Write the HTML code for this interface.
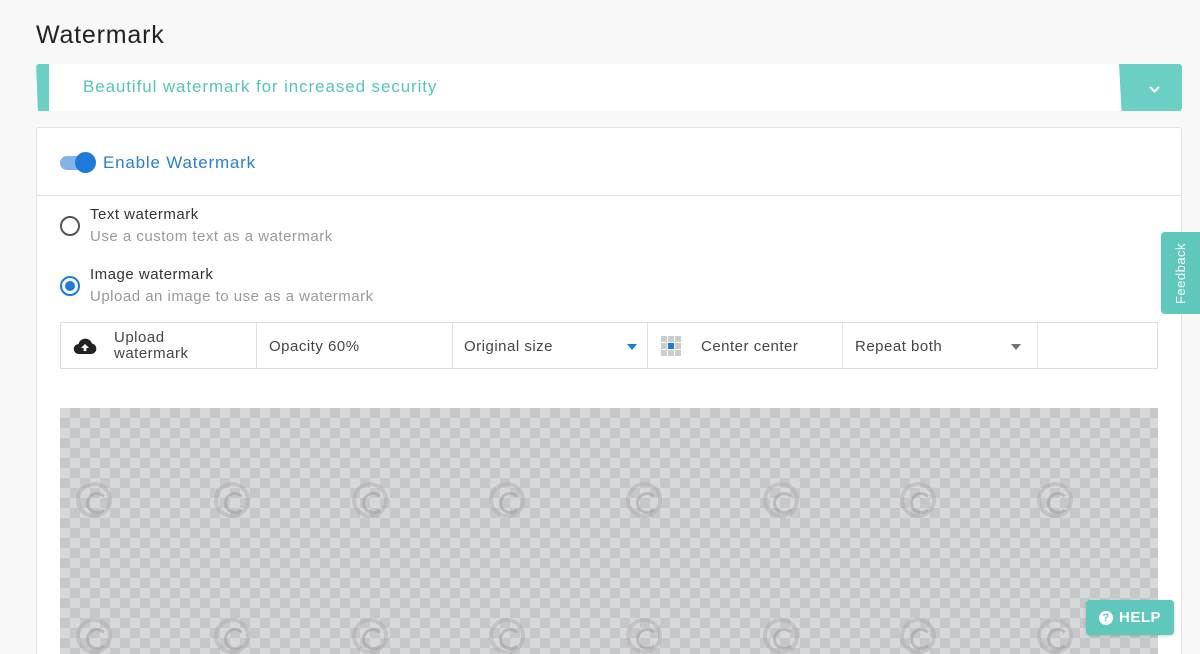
<!DOCTYPE html>
<html style="height:654px;overflow:hidden"><head><style>
*{box-sizing:border-box;margin:0;padding:0}
body{width:1200px;height:654px;overflow:hidden;background:#f8f8f8;font-family:"Liberation Sans",sans-serif;position:relative;color:#333}
.abs{position:absolute}
h1{position:absolute;left:36px;top:21px;font-size:25px;font-weight:normal;color:#222;letter-spacing:.8px}
.banner{left:36px;top:64px;width:1146px;height:47px;background:#fff}
.card{left:36px;top:127px;width:1146px;height:540px;background:#fff;border:1px solid #e3e3e3;border-radius:3px}
.cell{position:absolute;top:0;height:46px;border-right:1px solid #e0e0e0;font-size:15px;color:#444;display:flex;align-items:center;letter-spacing:.5px}
.checker{left:60px;top:408px;width:1098px;height:260px;
background-color:#d7d8da;
background-image:linear-gradient(45deg,#c6c7c9 25%,transparent 25%,transparent 75%,#c6c7c9 75%),linear-gradient(45deg,#c6c7c9 25%,transparent 25%,transparent 75%,#c6c7c9 75%);
background-size:20px 20px;background-position:0 0,10px 10px}
.cp{position:absolute;width:36px;height:36px;border-radius:50%;border:4px solid rgba(170,170,172,.45);}
.cp:after{content:"";position:absolute;left:6px;top:6px;width:16px;height:16px;border-radius:50%;border:3px solid rgba(150,150,152,.45);border-right-color:transparent}
.t{letter-spacing:.5px}
</style></head><body>
<h1>Watermark</h1>
<div class="abs banner"></div>
<div class="abs" style="left:36px;top:64px;width:13px;height:47px;background:#6ccfc4;clip-path:polygon(0 0,100% 0,100% 100%,15% 100%);border-radius:3px 0 0 3px"></div>
<div class="abs" style="left:83px;top:77px;font-size:17px;color:#55c5b9;letter-spacing:.9px">Beautiful watermark for increased security</div>
<div class="abs" style="left:1119px;top:64px;width:63px;height:47px;background:#6ccfc4;clip-path:polygon(0 0,100% 0,100% 100%,4% 100%);border-radius:0 3px 3px 0"></div>
<svg class="abs" style="left:1148px;top:85px" width="13" height="9" viewBox="0 0 13 9"><path d="M2 2l4.5 4.5L11 2" stroke="#fff" stroke-width="2" fill="none"/></svg>

<div class="abs card"></div>
<div class="abs" style="left:37px;top:195px;width:1144px;height:1px;background:#e3e3e3"></div>
<div class="abs" style="left:60px;top:156px;width:32px;height:14px;border-radius:7px;background:#82b4ea"></div>
<div class="abs" style="left:75px;top:152px;width:21px;height:21px;border-radius:50%;background:#1e7ad8"></div>
<div class="abs" style="left:103px;top:153px;font-size:17px;color:#2a7fd0;letter-spacing:.8px">Enable Watermark</div>

<div class="abs" style="left:60px;top:216px;width:20px;height:20px;border-radius:50%;border:2px solid #555"></div>
<div class="abs t" style="left:90px;top:206px;font-size:15px;color:#333">Text watermark</div>
<div class="abs t" style="left:90px;top:228px;font-size:15px;color:#999">Use a custom text as a watermark</div>
<div class="abs" style="left:60px;top:276px;width:20px;height:20px;border-radius:50%;border:2px solid #1e7ad8"></div>
<div class="abs" style="left:65px;top:281px;width:10px;height:10px;border-radius:50%;background:#1e7ad8"></div>
<div class="abs t" style="left:90px;top:266px;font-size:15px;color:#333">Image watermark</div>
<div class="abs t" style="left:90px;top:288px;font-size:15px;color:#999">Upload an image to use as a watermark</div>

<div class="abs" style="left:60px;top:322px;width:1098px;height:47px;border:1px solid #dcdcdc">
 <div class="cell" style="left:0;width:196px;padding-left:12px">
  <svg width="24" height="18" viewBox="0 0 24 18"><path d="M6 17a5 5 0 0 1-.5-10A7 7 0 0 1 19 6.5 5.3 5.3 0 0 1 18.5 17z" fill="#222"/><path d="M12 7l-4 4h2.6v3h2.8v-3H16z" fill="#fff"/></svg>
  <div style="margin-left:17px;line-height:16px">Upload<br>watermark</div></div>
 <div class="cell" style="left:196px;width:196px;padding-left:12px">Opacity 60%</div>
 <div class="cell" style="left:392px;width:195px;padding-left:11px">Original size<span style="position:absolute;left:174px;top:21px;border:5px solid transparent;border-top:6px solid #1e7ad8"></span></div>
 <div class="cell" style="left:587px;width:195px;padding-left:13px">
  <svg width="20" height="20"><g fill="#ccc"><rect x="0" y="0" width="6" height="6"/><rect x="7" y="0" width="6" height="6"/><rect x="14" y="0" width="6" height="6"/><rect x="0" y="7" width="6" height="6"/><rect x="14" y="7" width="6" height="6"/><rect x="0" y="14" width="6" height="6"/><rect x="7" y="14" width="6" height="6"/><rect x="14" y="14" width="6" height="6"/></g><rect x="7" y="7" width="6" height="6" fill="#1e7ad8"/></svg>
  <span style="margin-left:20px">Center center</span></div>
 <div class="cell" style="left:782px;width:195px;padding-left:12px">Repeat both<span style="position:absolute;left:168px;top:21px;border:5px solid transparent;border-top:6px solid #777"></span></div>
</div>

<div class="abs checker">
 <div class="cp" style="left:16px;top:74px"></div><div class="cp" style="left:154px;top:74px"></div><div class="cp" style="left:292px;top:74px"></div><div class="cp" style="left:429px;top:74px"></div><div class="cp" style="left:566px;top:74px"></div><div class="cp" style="left:703px;top:74px"></div><div class="cp" style="left:840px;top:74px"></div><div class="cp" style="left:977px;top:74px"></div>
 <div class="cp" style="left:16px;top:210px"></div><div class="cp" style="left:154px;top:210px"></div><div class="cp" style="left:292px;top:210px"></div><div class="cp" style="left:429px;top:210px"></div><div class="cp" style="left:566px;top:210px"></div><div class="cp" style="left:703px;top:210px"></div><div class="cp" style="left:840px;top:210px"></div><div class="cp" style="left:977px;top:210px"></div>
</div>

<div class="abs" style="left:1161px;top:232px;width:39px;height:82px;background:#5fc7bc;border-radius:4px 0 0 4px"></div>
<div class="abs" style="left:1161px;top:232px;width:39px;height:82px;display:flex;align-items:center;justify-content:center"><div style="transform:rotate(-90deg);color:#fff;font-size:13px;white-space:nowrap;letter-spacing:.5px">Feedback</div></div>

<div class="abs" style="left:1086px;top:600px;width:88px;height:35px;background:#5fc7bc;border-radius:4px;box-shadow:0 1px 3px rgba(0,0,0,.2);color:#fff;font-size:15px;font-weight:bold;display:flex;align-items:center;justify-content:center;letter-spacing:.5px">
 <span style="display:inline-block;width:14px;height:14px;border-radius:50%;background:#fff;color:#5fc7bc;font-size:11px;line-height:14px;text-align:center;margin-right:6px">?</span>HELP</div>
</body></html>
